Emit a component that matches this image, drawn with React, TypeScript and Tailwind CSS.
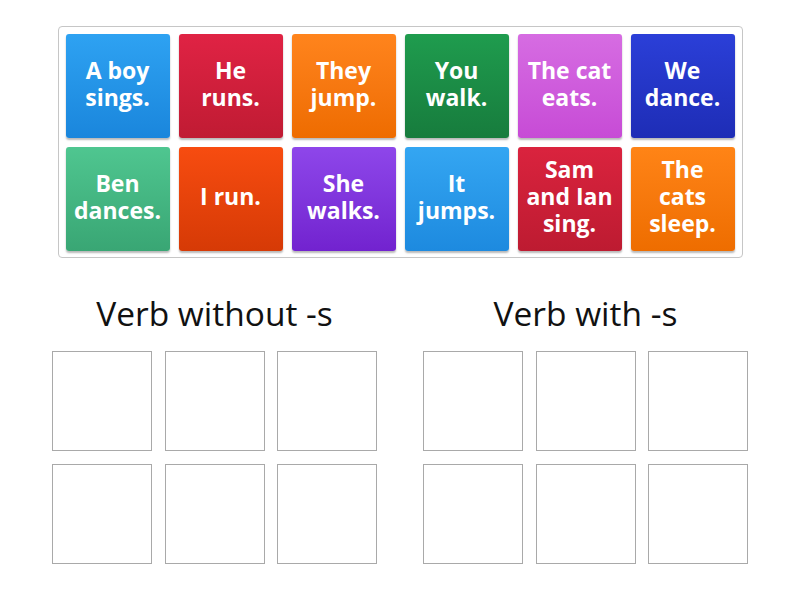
type Card = {
  lines: string[];
  bg: string;
};

const cards: Card[] = [
  { lines: ["A boy", "sings."], bg: "bg-gradient-to-b from-[#2ea2f2] to-[#1a86dc]" },
  { lines: ["He", "runs."], bg: "bg-gradient-to-b from-[#e02344] to-[#c01b33]" },
  { lines: ["They", "jump."], bg: "bg-gradient-to-b from-[#ff841c] to-[#ee6c00]" },
  { lines: ["You", "walk."], bg: "bg-gradient-to-b from-[#1f9c4e] to-[#177c3d]" },
  { lines: ["The cat", "eats."], bg: "bg-gradient-to-b from-[#d66ce2] to-[#c74bd6]" },
  { lines: ["We", "dance."], bg: "bg-gradient-to-b from-[#2b3fd8] to-[#1e2db6]" },
  { lines: ["Ben", "dances."], bg: "bg-gradient-to-b from-[#4fc690] to-[#39a674]" },
  { lines: ["I run."], bg: "bg-gradient-to-b from-[#f74c10] to-[#d63a06]" },
  { lines: ["She", "walks."], bg: "bg-gradient-to-b from-[#8e46ea] to-[#7222cf]" },
  { lines: ["It", "jumps."], bg: "bg-gradient-to-b from-[#34a6f2] to-[#1d8adf]" },
  { lines: ["Sam", "and Ian", "sing."], bg: "bg-gradient-to-b from-[#da233e] to-[#bd1b31]" },
  { lines: ["The", "cats", "sleep."], bg: "bg-gradient-to-b from-[#ff8416] to-[#ee6d00]" },
];

function Bin({ title }: { title: string }) {
  return (
    <div className="flex w-[325px] flex-col items-center">
      <h2 className="text-[33.5px] leading-[44px] font-normal whitespace-nowrap text-[#111]">{title}</h2>
      <div className="mt-4 grid grid-cols-3 gap-x-[12.5px] gap-y-[13px]">
        {Array.from({ length: 6 }).map((_, i) => (
          <div key={i} className="h-[100px] w-[100px] border border-[#a9a9a9] bg-white" />
        ))}
      </div>
    </div>
  );
}

export default function App() {
  return (
    <div
      className="h-[600px] w-[800px] bg-white"
      style={{ fontFamily: '"Open Sans", "Noto Sans", sans-serif' }}
    >
      <div className="flex justify-center pt-[26px]">
        <div className="rounded-[4px] border border-[#c6c6c6] px-[7px] pt-[7px] pb-[6px]">
          <div className="grid grid-cols-6 gap-[9px]">
            {cards.map((c, i) => (
              <div
                key={i}
                className={`flex h-[104px] w-[104px] flex-col items-center justify-center rounded-[3px] pb-[5px] shadow-[0_2px_2px_rgba(0,0,0,0.28)] ${c.bg}`}
              >
                {c.lines.map((l) => (
                  <span
                    key={l}
                    className="whitespace-nowrap text-[23px] leading-[27px] font-bold text-white"
                  >
                    {l}
                  </span>
                ))}
              </div>
            ))}
          </div>
        </div>
      </div>

      <div className="mt-[33px] flex justify-center gap-[46px]">
        <Bin title="Verb without -s" />
        <Bin title="Verb with -s" />
      </div>
    </div>
  );
}
